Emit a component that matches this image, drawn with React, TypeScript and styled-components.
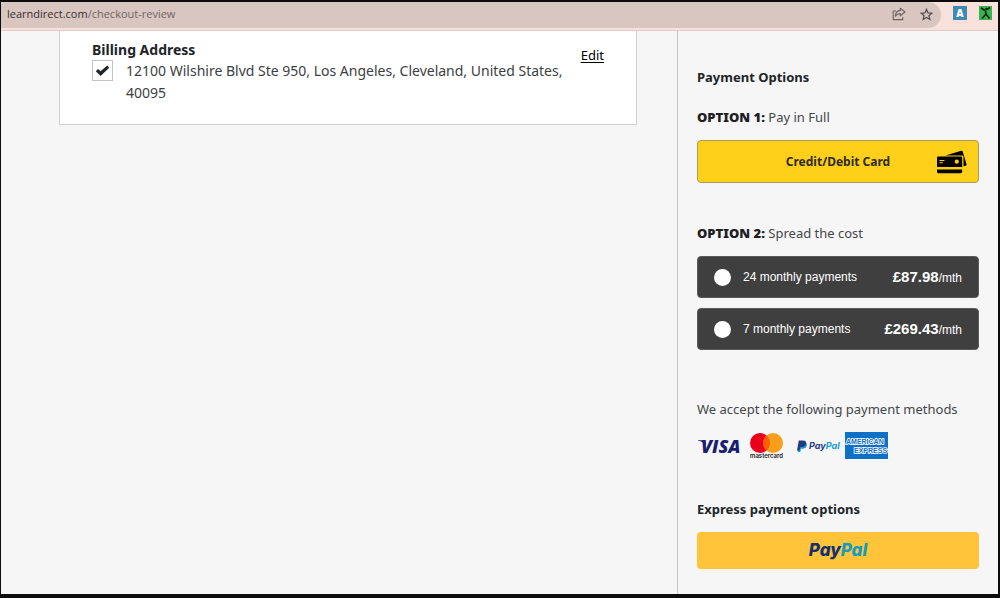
import React from "react";
import styled, { createGlobalStyle } from "styled-components";

const GlobalStyle = createGlobalStyle`
  * { box-sizing: border-box; }
  body {
    margin: 0;
    background: #f6f6f6;
    color: #212529;
    font-family: "Noto Sans", "Open Sans", sans-serif;
  }
`;

const Frame = styled.div`
  min-height: 100vh;
  display: flex;
  flex-direction: column;
  border: solid #0c0c0c;
  border-width: 2px 2px 4px 1px;
`;

const BrowserBar = styled.header`
  display: flex;
  align-items: flex-start;
  height: 29px;
  background: #f8e1da;
  border-bottom: 1px solid #e3cbc4;
`;

const AddressField = styled.div`
  flex: 1;
  display: flex;
  align-items: center;
  gap: 14px;
  height: 26px;
  padding: 0 8px 2px 6px;
  background: #dac6c0;
  border-radius: 0 13px 13px 0;
`;

const Address = styled.div`
  flex: 1;
  font-family: "Open Sans", "Noto Sans", sans-serif;
  font-size: 11px;
  line-height: 20px;
  color: #6f6562;
`;

const Host = styled.span`
  color: #35302f;
`;

const BarButton = styled.button`
  display: flex;
  padding: 0;
  border: 0;
  background: none;
`;

const Extensions = styled.div`
  display: flex;
  gap: 12px;
  padding: 4px 6px 0 12px;
`;

const Page = styled.div`
  flex: 1;
  display: grid;
  grid-template-columns: minmax(0, 1fr) 321px;
`;

const Main = styled.main`
  padding: 0 40px 0 58px;
`;

const Card = styled.section`
  display: flex;
  justify-content: space-between;
  padding: 9px 32px 20px;
  background: #fff;
  border: 1px solid #cfcfcf;
  border-top: 0;
`;

const CardTitle = styled.h2`
  margin: 0;
  font-size: 14px;
  line-height: 20px;
  font-weight: 700;
`;

const AddressLabel = styled.label`
  display: flex;
  gap: 13px;
  font-size: 14px;
  line-height: 22px;
  color: #3c4043;
`;

const CheckBox = styled.input`
  appearance: none;
  flex: none;
  width: 21px;
  height: 21px;
  margin: 0;
  border: 1px solid #c4c4c4;
  background: #fff;
`;

const CheckHolder = styled.span`
  display: grid;
  align-self: flex-start;
  place-items: center;

  & > * { grid-area: 1 / 1; }
  & > svg { pointer-events: none; }
`;

const EditLink = styled.a`
  padding-top: 5px;
  font-size: 13px;
  line-height: 20px;
  color: #000;
  text-underline-offset: 2px;
`;

const Sidebar = styled.aside`
  display: flex;
  flex-direction: column;
  padding: 36px 19px 24px;
  border-left: 1px solid #c6c6c6;
`;

const Heading = styled.h3`
  margin: 0;
  font-size: 13px;
  line-height: 20px;
  font-weight: 700;
`;

const OptionTitle = styled.p<{ $top: number }>`
  margin: ${(p) => p.$top}px 0 13px;
  font-size: 13px;
  line-height: 20px;
  color: #43474a;

  b { font-weight: 900; color: #1d2023; }
`;

const CardButton = styled.button`
  display: grid;
  grid-template-columns: 30px 1fr 30px;
  align-items: center;
  height: 43px;
  padding: 0 11px;
  border: 1px solid #a89c5c;
  border-radius: 4px;
  background: #fed019;
  color: #2f2b1c;
  font: 700 12px/20px "Noto Sans", sans-serif;

  span { grid-column: 2; }
`;

const Plans = styled.div`
  display: flex;
  flex-direction: column;
  gap: 10px;
`;

const Plan = styled.label`
  display: flex;
  align-items: center;
  height: 42px;
  padding: 0 16px;
  border: 1px solid #5a5a5a;
  border-radius: 4px;
  background: #3f3f3f;
  color: #fff;
  font: 12px/20px "Liberation Sans", Arial, sans-serif;
`;

const Radio = styled.input`
  appearance: none;
  width: 17px;
  height: 17px;
  margin: 0 12px 0 0;
  border-radius: 50%;
  background: #fff;
`;

const Price = styled.span`
  margin-left: auto;

  b { font-size: 15px; }
`;

const Accepted = styled.p`
  margin: 49px 0 13px;
  font-size: 13px;
  line-height: 20px;
  color: #43474a;
`;

const Logos = styled.div`
  display: flex;
  height: 30px;
  margin-bottom: 37px;
`;

const PayPalButton = styled.button`
  display: flex;
  align-items: center;
  justify-content: center;
  height: 37px;
  margin-top: 13px;
  padding: 0;
  border: 0;
  border-radius: 4px;
  background: #ffc43a;
`;

const ShareIcon = () => (
  <svg width="14" height="14" viewBox="0 0 14 14" fill="none" stroke="#6d6260" strokeWidth="1.1" strokeLinejoin="round">
    <path d="M4 4H1.2v8.6h9.6V10" />
    <path d="M8.3 1.2 13 5 8.3 8.8V6.6C6 6.6 4.5 7.4 3.3 9.2 3.5 6 5.2 3.7 8.3 3.4Z" />
  </svg>
);

const StarIcon = () => (
  <svg width="13" height="13" viewBox="0 0 13 13" fill="none" stroke="#564c4a" strokeWidth="1.2">
    <path d="m6.5 1.3 1.5 3.6 3.9.3-3 2.5 1 3.8-3.4-2.1-3.4 2.1 1-3.8-3-2.5 3.9-.3Z" />
  </svg>
);

const TranslateBadge = () => (
  <svg width="14" height="14" viewBox="0 0 14 14">
    <path fill="#3f8ab5" d="M0 0h14v14H0z" />
    <text x="7" y="10.5" textAnchor="middle" fill="#fff" fontFamily="Open Sans, sans-serif" fontSize="10" fontWeight="800">A</text>
  </svg>
);

const RunnerBadge = () => (
  <svg width="13" height="14" viewBox="0 0 13 14">
    <path fill="#35b34c" d="M0 0h13v14H0z" />
    <path d="M2 2 6 4.5M8 3.500 11 1.500M6.500 4.500 7 8.500M7 8 3 12.500M7 8l3.500 4.500" fill="none" stroke="#10200f" strokeWidth="1.6" />
    <circle cx="7.4" cy="3" r="1.2" fill="#10200f" />
  </svg>
);

const CheckIcon = () => (
  <svg width="15" height="12" viewBox="0 0 15 12">
    <path d="M.8 6.2 3 3.900 5.500 6.200 12.300.4l1.900 2.400L5.600 11Z" fill="#212529" />
  </svg>
);

const CardsIcon = () => (
  <svg width="30" height="24" viewBox="0 0 30 24">
    <path d="M8.5 5.6 24.2.7c.7-.2 1.2.1 1.5.8l3.8 12.8c.2.8-.2 1.3-.9 1.5l-2.1.5V7.2c0-1-.6-1.6-1.6-1.6Z" />
    <path fillRule="evenodd" d="M1.4 6.6h22.4c.9 0 1.4.5 1.4 1.4v9H0V8c0-.9.5-1.4 1.4-1.4ZM2.5 10v1h5v-1Zm0 2.2v1h3.3v-1Zm17.3-2.6a2.1 2.1 0 1 0 0 4.2 2.1 2.1 0 0 0 0-4.2Z" />
    <path d="M0 19.4h25.2v2.4c0 .9-.5 1.4-1.4 1.4H1.4C.5 23.200 0 22.700 0 21.800Z" />
  </svg>
);

const PaymentLogos = () => (
  <svg width="200" height="30" viewBox="0 0 200 30" role="img" aria-label="Visa, Mastercard, PayPal, American Express">
    <path d="M1 8.3h6l2 3-.8 1.800C6.800 10.800 4.500 9.300 1 8.800Z" fill="#1a1f71" />
    <text x="4" y="21" fill="#1a1f71" fontFamily="Open Sans, sans-serif" fontSize="18" fontWeight="800" fontStyle="italic">VISA</text>
    <circle cx="63" cy="11" r="10" fill="#eb001b" />
    <circle cx="76" cy="11" r="10" fill="#f79e1b" />
    <path d="M69.500 3.400a10 10 0 0 1 0 15.200 10 10 0 0 1 0-15.200Z" fill="#ff5f00" />
    <text x="69.500" y="26" textAnchor="middle" fill="#222" fontFamily="Inter, sans-serif" fontSize="6" fontWeight="600">mastercard</text>
    <path d="M102.500 10h4.300c2.600 0 3.500 1.700 3 3.500-.5 2.300-2.200 3.300-4.500 3.300h-1.400l-.6 3.200h-2.500Z" fill="#179bd7" />
    <path d="M101.800 8.500h4.400c2.400 0 3.300 1.400 2.900 3.200-.5 2.300-2.200 3.200-4.500 3.200h-1.300l-.7 3.600h-2.600Z" fill="#253b80" />
    <text x="112" y="17" fontFamily="Inter, sans-serif" fontSize="9" fontWeight="700" fontStyle="italic" fill="#253b80">
      Pay<tspan fill="#179bd7">Pal</tspan>
    </text>
    <path d="M148 0h43v27h-43z" fill="#0f70c8" />
    <g fill="#0f70c8" stroke="#fff" strokeWidth="1.6" paintOrder="stroke" fontFamily="Liberation Sans, sans-serif" fontSize="7" fontWeight="700">
      <text x="149" y="12">AMERICAN</text>
      <text x="157" y="21">EXPRESS</text>
    </g>
  </svg>
);

const PayPalWordmark = () => (
  <svg width="90" height="28" viewBox="0 0 90 28" role="img" aria-label="PayPal">
    <text x="45" y="19" textAnchor="middle" fontFamily="Inter, sans-serif" fontSize="17" fontWeight="800" fontStyle="italic" fill="#14316f">
      Pay<tspan fill="#179bbf">Pal</tspan>
    </text>
  </svg>
);

const plans = [
  { id: "24", label: "24 monthly payments", price: "£87.98" },
  { id: "7", label: "7 monthly payments", price: "£269.43" },
];

export default function App() {
  return (
    <Frame>
      <GlobalStyle />
      <BrowserBar>
        <AddressField>
          <Address><Host>learndirect.com</Host>/checkout-review</Address>
          <BarButton aria-label="Share"><ShareIcon /></BarButton>
          <BarButton aria-label="Bookmark"><StarIcon /></BarButton>
        </AddressField>
        <Extensions>
          <BarButton aria-label="Translate"><TranslateBadge /></BarButton>
          <BarButton aria-label="Runner"><RunnerBadge /></BarButton>
        </Extensions>
      </BrowserBar>
      <Page>
        <Main>
          <Card>
            <div>
              <CardTitle>Billing Address</CardTitle>
              <AddressLabel>
                <CheckHolder>
                  <CheckBox type="checkbox" defaultChecked />
                  <CheckIcon />
                </CheckHolder>
                <span>
                  12100 Wilshire Blvd Ste 950, Los Angeles, Cleveland, United States,
                  <br />
                  40095
                </span>
              </AddressLabel>
            </div>
            <EditLink href="#edit">Edit</EditLink>
          </Card>
        </Main>
        <Sidebar>
          <Heading>Payment Options</Heading>
          <OptionTitle $top={20}><b>OPTION 1:</b> Pay in Full</OptionTitle>
          <CardButton><span>Credit/Debit Card</span><CardsIcon /></CardButton>
          <OptionTitle $top={40}><b>OPTION 2:</b> Spread the cost</OptionTitle>
          <Plans>
            {plans.map((plan) => (
              <Plan key={plan.id}>
                <Radio type="radio" name="plan" value={plan.id} />
                {plan.label}
                <Price><b>{plan.price}</b>/mth</Price>
              </Plan>
            ))}
          </Plans>
          <Accepted>We accept the following payment methods</Accepted>
          <Logos><PaymentLogos /></Logos>
          <Heading>Express payment options</Heading>
          <PayPalButton><PayPalWordmark /></PayPalButton>
        </Sidebar>
      </Page>
    </Frame>
  );
}
